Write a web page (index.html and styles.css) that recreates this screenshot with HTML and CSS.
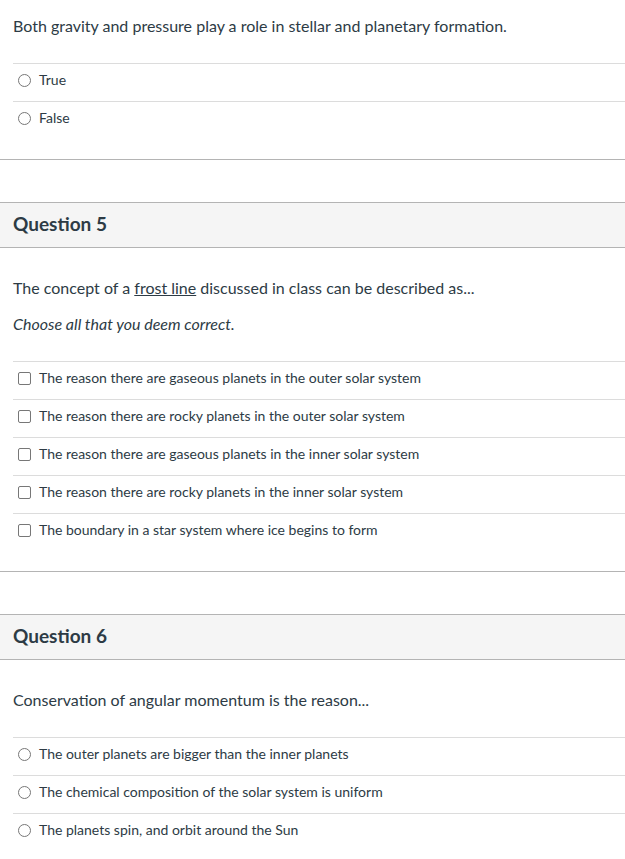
FILE: index.html
```html
<!DOCTYPE html>
<html lang="en">
<head>
<meta charset="utf-8">
<title>Quiz</title>
<link rel="stylesheet" href="styles.css">
</head>
<body>
<div class="question first">
  <div class="question-body">
    <div class="question-text"><p>Both gravity and pressure play a role in stellar and planetary formation.</p></div>
    <ul class="answers">
      <li class="answer"><span class="radio"></span><span class="label">True</span></li>
      <li class="answer"><span class="radio"></span><span class="label">False</span></li>
    </ul>
  </div>
</div>

<div class="question">
  <div class="question-header"><h2>Question 5</h2></div>
  <div class="question-body">
    <div class="question-text">
      <p>The concept of a <span class="ul">frost line</span> discussed in class can be described as...</p>
      <p class="note"><em>Choose all that you deem correct.</em></p>
    </div>
    <ul class="answers">
      <li class="answer"><span class="check"></span><span class="label">The reason there are gaseous planets in the outer solar system</span></li>
      <li class="answer"><span class="check"></span><span class="label">The reason there are rocky planets in the outer solar system</span></li>
      <li class="answer"><span class="check"></span><span class="label">The reason there are gaseous planets in the inner solar system</span></li>
      <li class="answer"><span class="check"></span><span class="label">The reason there are rocky planets in the inner solar system</span></li>
      <li class="answer"><span class="check"></span><span class="label">The boundary in a star system where ice begins to form</span></li>
    </ul>
  </div>
</div>

<div class="question">
  <div class="question-header"><h2>Question 6</h2></div>
  <div class="question-body">
    <div class="question-text"><p>Conservation of angular momentum is the reason...</p></div>
    <ul class="answers">
      <li class="answer"><span class="radio"></span><span class="label">The outer planets are bigger than the inner planets</span></li>
      <li class="answer"><span class="radio"></span><span class="label">The chemical composition of the solar system is uniform</span></li>
      <li class="answer"><span class="radio"></span><span class="label">The planets spin, and orbit around the Sun</span></li>
    </ul>
  </div>
</div>
</body>
</html>
```

FILE: styles.css
```css
* { box-sizing: border-box; }
html, body { margin: 0; padding: 0; background: #fff; }
body {
  font-family: Lato, "Open Sans", sans-serif;
  color: #2d3b45;
  width: 625px;
}
.question {
  border-bottom: 1px solid #b4b4b4;
  margin-bottom: 42px;
}
.question-header {
  background: #f5f5f5;
  border-top: 1px solid #b4b4b4;
  border-bottom: 1px solid #b4b4b4;
  height: 46px;
  display: flex;
  align-items: center;
  padding-left: 13px;
  padding-bottom: 2px;
}
.question-header h2 {
  margin: 0;
  font-size: 19px;
  font-weight: 700;
  line-height: 24px;
  color: #2d3b45;
}
.question-body {
  padding: 28px 0 20px 13px;
}
.first .question-body { padding-top: 14px; }
.question-text p {
  margin: 0;
  font-size: 16px;
  line-height: 24px;
}
.question-text p + p { margin-top: 12px; }
.question-text .ul { text-decoration: underline; }
.question-text { margin-bottom: 25px; }
.answers {
  list-style: none;
  margin: 0;
  padding: 0;
}
.answer {
  border-top: 1px solid #dcdcdc;
  height: 38px;
  display: flex;
  align-items: center;
  padding-left: 5px;
  padding-bottom: 5px;
  font-size: 14px;
}
.radio {
  width: 13px;
  height: 13px;
  border: 1px solid #777;
  border-radius: 50%;
  flex: none;
  margin-right: 8px;
}
.check {
  width: 13px;
  height: 13px;
  border: 1px solid #777;
  border-radius: 2px;
  flex: none;
  margin-right: 8px;
}
.label { line-height: 18px; }
```
